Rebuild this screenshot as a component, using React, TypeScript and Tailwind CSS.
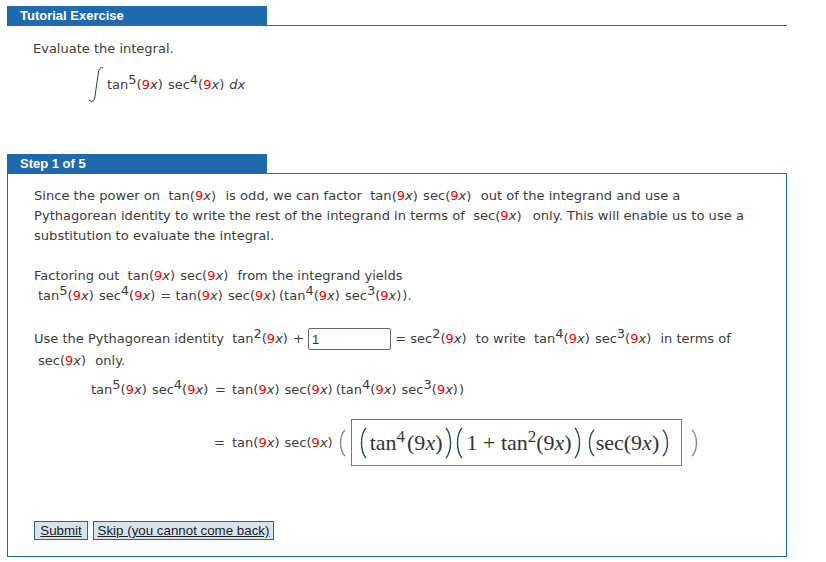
const verdana = "font-['DejaVu_Sans',_Verdana,_sans-serif]";
const barText = "relative h-[20px] w-[260px] bg-[#1f6aad] pl-[13px] text-[13px] leading-[19px] font-bold text-white font-['Liberation_Sans',_Arial,_sans-serif]";

function Nx() {
  return (
    <span className="mr-[1px]">
      (<span className="text-[#f00]">9</span>
      <i>x</i>)
    </span>
  );
}

function Pow({ n }: { n: number }) {
  return <sup className="relative top-[-5px] align-baseline text-[13px] leading-none">{n}</sup>;
}

function Fn({ name, pow }: { name: string; pow?: number }) {
  return (
    <span>
      {name}
      {pow ? <Pow n={pow} /> : null}
      <Nx />
    </span>
  );
}

function Paren({ side, tall, color, className }: { side: "l" | "r"; tall: number; color: string; className?: string }) {
  const d = side === "l" ? "M8 1 C2 9 2 25 8 33" : "M2 1 C8 9 8 25 2 33";
  return (
    <svg width="10" height={tall} viewBox="0 0 10 34" preserveAspectRatio="none" className={`shrink-0 ${className ?? ""}`}>
      <path d={d} fill="none" stroke={color} strokeWidth="1.4" />
    </svg>
  );
}

function TexPow({ n }: { n: number }) {
  return <sup className="relative top-[-8px] align-baseline text-[17px] leading-none">{n}</sup>;
}

function Tex() {
  return (
    <div className="flex h-[47px] w-[331px] items-center border border-[#777] pl-[6px] text-[22px] leading-none text-[#333] font-['Liberation_Serif',_serif]">
      <Paren side="l" tall={32} color="#1d4a6e" />
      <span className="ml-[2px]">tan<TexPow n={4} /></span>
      <span className="ml-[2px]">(9<i>x</i>)</span>
      <Paren side="r" tall={32} color="#1d4a6e" className="ml-[2px]" />
      <Paren side="l" tall={32} color="#1d4a6e" />
      <span className="ml-[2px] whitespace-pre">1 + tan<TexPow n={2} /></span>
      <span>(9<i>x</i>)</span>
      <Paren side="r" tall={32} color="#1d4a6e" className="ml-[1px]" />
      <Paren side="l" tall={28} color="#1d4a6e" className="ml-[3px]" />
      <span>sec(9<i>x</i>)</span>
      <Paren side="r" tall={28} color="#1d4a6e" className="ml-[2px]" />
    </div>
  );
}

export default function App() {
  return (
    <div className={`h-[562px] w-[826px] overflow-hidden bg-white pl-[7px] pt-[6px] text-[13px] text-[#3c3c3c] ${verdana}`}>
      <div className="h-[20px] w-[780px] border-b border-[#1f6aad]">
        <div className={barText}>Tutorial Exercise</div>
      </div>

      <div className="pl-[26px] pt-[14px] leading-[18px]">Evaluate the integral.</div>
      <div className="flex h-[52px] items-center pl-[80px] pt-[2px]">
        <svg width="18" height="38" viewBox="0 0 18 38" className="mr-[2px] shrink-0">
          <path d="M16 2 C13.5 0.5 12 3 11.5 6 L8 30 C7.5 35 5 37 2 34" fill="none" stroke="#222" strokeWidth="0.9" />
        </svg>
        <span>
          <Fn name="tan" pow={5} /> <Fn name="sec" pow={4} /> <i>dx</i>
        </span>
      </div>

      <div className="mt-[44px]">
        <div className={`${barText} mb-[-1px]`}>Step 1 of 5</div>
        <div className="h-[384px] w-[780px] border border-[#1f6aad] pl-[26px] pt-[12px]">
          <p className="leading-[20px] whitespace-nowrap text-[13.08px]">
            Since the power on&nbsp; <Fn name="tan" />&nbsp; is odd, we can factor&nbsp; <Fn name="tan" /> <Fn name="sec" />&nbsp; out of the integrand and use a
            <br />
            Pythagorean identity to write the rest of the integrand in terms of&nbsp; <Fn name="sec" />&nbsp; <span className="ml-[2px]">only. This will enable us to use a</span>
            <br />
            substitution to evaluate the integral.
          </p>

          <p className="mt-[20px] leading-[20px] whitespace-nowrap">
            Factoring out&nbsp; <Fn name="tan" /> <Fn name="sec" />&nbsp; from the integrand yields
          </p>
          <p className="pl-[4px] leading-[20px] whitespace-nowrap">
            <Fn name="tan" pow={5} /> <Fn name="sec" pow={4} /> = <Fn name="tan" /> <Fn name="sec" />
            <span className="ml-[2px]">(tan<Pow n={4} /></span>
            <Nx /> <Fn name="sec" pow={3} />).
          </p>

          <div className="mt-[22px] flex h-[22px] items-center whitespace-nowrap">
            <span>Use the Pythagorean identity&nbsp; <Fn name="tan" pow={2} /> +&nbsp;</span>
            <input
              readOnly
              value="1"
              className="h-[22px] w-[83px] rounded-[2px] border border-[#666] px-[3px] text-[13px] text-[#333] outline-none font-['Liberation_Sans',_Arial,_sans-serif]"
            />
            <span>&nbsp;= <Fn name="sec" pow={2} />&nbsp; to write&nbsp; <Fn name="tan" pow={4} /> <Fn name="sec" pow={3} />&nbsp; in terms of</span>
          </div>
          <p className="pl-[4px] pt-[1px] leading-[20px]">
            <Fn name="sec" />&nbsp; only.
          </p>

          <div className="ml-[57px] mt-[9px] flex h-[20px] items-center whitespace-nowrap">
            <span className="w-[124px]"><Fn name="tan" pow={5} /> <Fn name="sec" pow={4} /></span>
            <span className="w-[17px]">=</span>
            <span>
              <Fn name="tan" /> <Fn name="sec" />
              <span className="ml-[2px]">(tan<Pow n={4} /></span>
              <Nx /> <Fn name="sec" pow={3} />)
            </span>
          </div>

          <div className="ml-[180px] mt-[19px] flex h-[47px] items-center whitespace-nowrap">
            <span className="w-[18px]">=</span>
            <span><Fn name="tan" /> <Fn name="sec" /></span>
            <Paren side="l" tall={28} color="#888" className="ml-[3px]" />
            <span className="ml-[4px]"><Tex /></span>
            <Paren side="r" tall={28} color="#888" className="ml-[8px]" />
          </div>

          <div className="mt-[55px] flex gap-[5px] whitespace-nowrap font-['Liberation_Sans',_Arial,_sans-serif] text-[13.33px]">
            <button className="h-[19px] w-[54px] border border-[#2e6399] bg-[#d7e4f0] leading-[15px] text-[#222] underline">Submit</button>
            <button className="h-[19px] w-[181px] border border-[#2e6399] bg-[#d7e4f0] leading-[15px] text-[#222] underline">Skip (you cannot come back)</button>
          </div>
        </div>
      </div>
    </div>
  );
}
